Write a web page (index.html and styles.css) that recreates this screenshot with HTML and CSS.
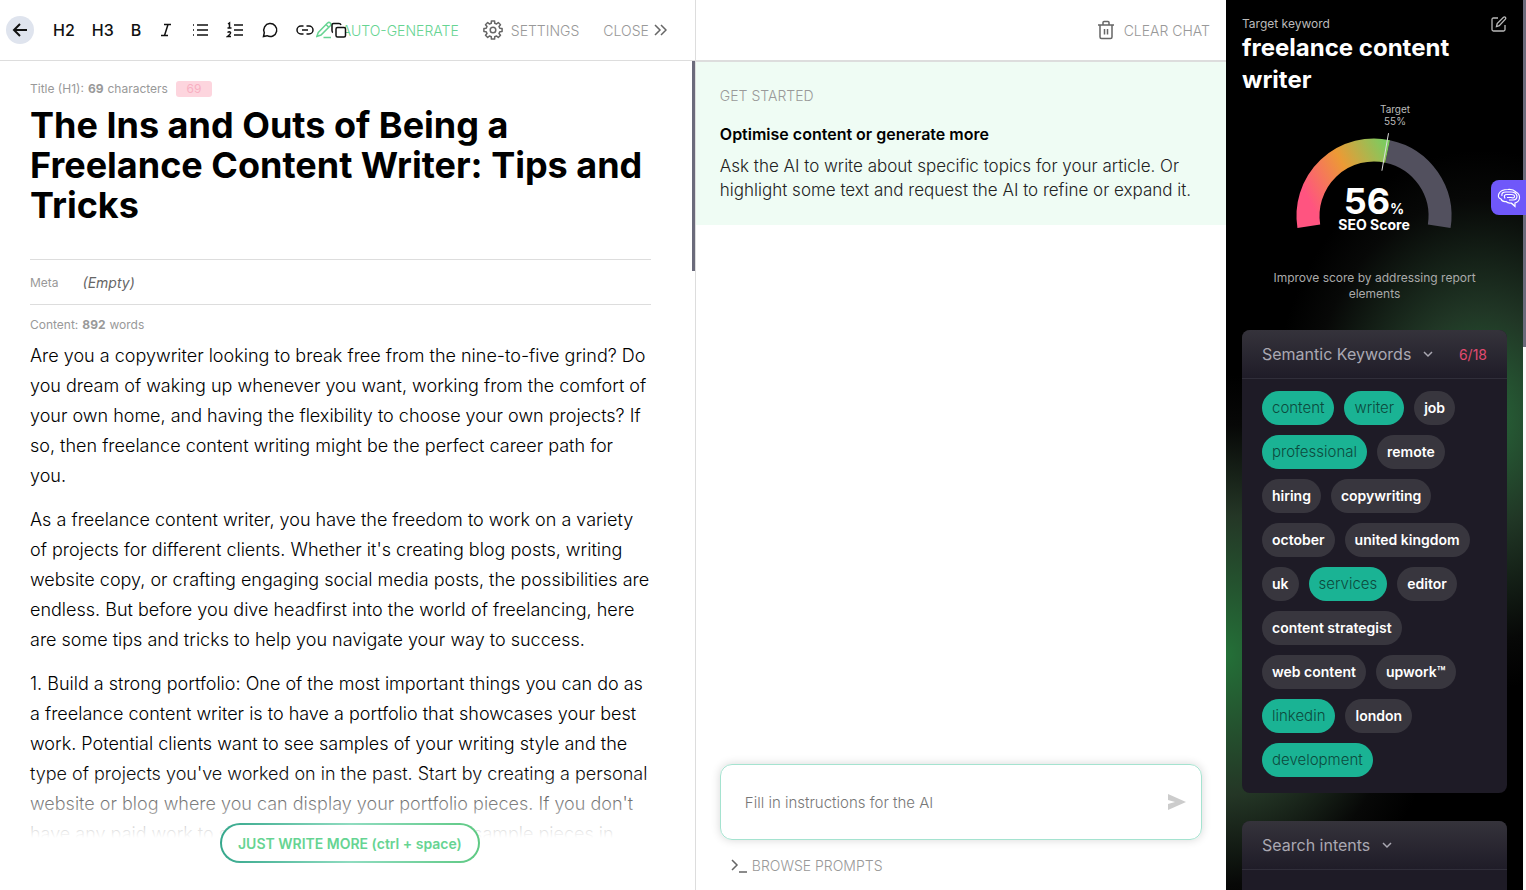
FILE: index.html
```html
<!DOCTYPE html>
<html lang="en">
<head>
  <meta charset="UTF-8" />
  <meta name="viewport" content="width=device-width, initial-scale=1.0"/>
  <title>Content editor</title>
  <link rel="stylesheet" href="styles.css">
</head>
<body>
  <div class="app">

    <main class="editor">
      <header class="toolbar">
        <div class="tools">
          <button type="button" class="back" aria-label="Back">
            <svg width="16" height="16" viewBox="0 0 16 16"><path d="M15 8H2M8 2L2 8l6 6"/></svg>
          </button>
          <button type="button" class="tool">H2</button>
          <button type="button" class="tool">H3</button>
          <button type="button" class="tool">B</button>
          <button type="button" class="tool" aria-label="Italic">
            <svg class="thin" width="16" height="18" viewBox="0 0 16 18"><path d="M6 3.500h7M3 14.500h7M10 3.500L6.500 14.500"/></svg>
          </button>
          <button type="button" class="tool" aria-label="Bullet list">
            <svg class="thin" width="18" height="18" viewBox="0 0 18 18"><path d="M6 4h11M6 9h11M6 14h11M2 4h1M2 9h1M2 14h1"/></svg>
          </button>
          <button type="button" class="tool" aria-label="Numbered list">
            <svg class="thin" width="18" height="18" viewBox="0 0 18 18"><path d="M8 4h9M8 9h9M8 14h9M2 3l1.500-1v5M1.500 7h4M1.500 11.500q2-1.500 3 0q.5 1-3 4H5"/></svg>
          </button>
          <button type="button" class="tool" aria-label="Comment">
            <svg class="thin" width="18" height="18" viewBox="0 0 18 18"><path d="M2.500 15.500l.8-3.800a6.500 6.500 0 1 1 2.700 3z"/></svg>
          </button>
          <button type="button" class="tool" aria-label="Link">
            <svg class="thin" width="18" height="18" viewBox="0 0 18 18"><path d="M7.500 5H5a4 4 0 0 0 0 8h2.500M10.500 5H13a4 4 0 0 1 0 8h-2.500M6 9h6"/></svg>
          </button>
          <button type="button" class="tool" aria-label="Copy">
            <svg class="thin" width="16" height="18" viewBox="0 0 16 18"><rect x="5" y="6.500" width="9.500" height="9.500" rx="1.500" fill="#fff"/><path d="M2 11.500c-1-.3-1-1-1-2V4Q1 2.500 2.500 2.500h5.500q1.500 0 2 1.500"/></svg>
          </button>
        </div>
        <div class="actions">
          <button type="button" class="action generate">
            <svg width="18" height="20" viewBox="0 0 18 20"><path d="M.8 16.500l1.500-4L11.500 3q1.500-1.200 2.800 0t0 2.800L5 15zM10 4.500l2.800 2.800M7.500 17.500H15"/></svg>
            <span>AUTO-GENERATE</span>
          </button>
          <button type="button" class="action">
            <svg width="20" height="20" viewBox="0 0 20 20"><path stroke-linejoin="round" d="M8.300 3.200L8.400.9h3.200l.1 2.300L13.600 4l1.700-1.500 2.200 2.200L16 6.400l.8 1.900 2.300.1v3.200l-2.300.1-.8 1.900 1.500 1.700-2.200 2.200-1.700-1.500-1.900.8-.1 2.300H8.400l-.1-2.300L6.400 16l-1.700 1.500-2.200-2.200L4 13.600l-.8-1.900-2.300-.1V8.400l2.300-.1L4 6.400 2.500 4.700l2.200-2.200L6.400 4z"/><circle cx="10" cy="10" r="2.800"/></svg>
            <span>SETTINGS</span>
          </button>
          <button type="button" class="action close">
            <span>CLOSE</span>
            <svg width="14" height="14" viewBox="0 0 14 14"><path d="M2 2l5 5-5 5M8 2l5 5-5 5"/></svg>
          </button>
        </div>
      </header>

      <article class="document">
        <p class="caption">Title (H1): <b>69</b> characters <span class="badge">69</span></p>
        <h1>The Ins and Outs of Being a Freelance Content Writer: Tips and Tricks</h1>
        <div class="meta"><span class="meta-label">Meta</span><em>(Empty)</em></div>
        <p class="caption">Content: <b>892</b> words</p>
        <div class="text">
          <p>Are you a copywriter looking to break free from the nine-to-five grind? Do you dream of waking up whenever you want, working from the comfort of your own home, and having the flexibility to choose your own projects? If so, then freelance content writing might be the perfect career path for you.</p>
          <p>As a freelance content writer, you have the freedom to work on a variety of projects for different clients. Whether it's creating blog posts, writing website copy, or crafting engaging social media posts, the possibilities are endless. But before you dive headfirst into the world of freelancing, here are some tips and tricks to help you navigate your way to success.</p>
          <p>1. Build a strong portfolio: One of the most important things you can do as a freelance content writer is to have a portfolio that showcases your best work. Potential clients want to see samples of your writing style and the type of projects you've worked on in the past. Start by creating a personal website or blog where you can display your portfolio pieces. If you don't have any paid work to showcase yet, you can create sample pieces in</p>
        </div>
      </article>
      <div class="scroll-thumb"></div>
      <div class="fade">
        <button type="button" class="write-more">JUST WRITE MORE (ctrl + space)</button>
      </div>
    </main>

    <section class="chat">
      <header class="chat-header">
        <button type="button" class="action">
          <svg width="20" height="20" viewBox="0 0 20 20"><path d="M2 5h16M7 5V2.500q0-1 1-1h4q1 0 1 1V5M4 5v12q0 1.500 1.500 1.500h9q1.500 0 1.500-1.500V5M8.500 9v5.500M11.500 9v5.500"/></svg>
          <span>CLEAR CHAT</span>
        </button>
      </header>
      <div class="intro">
        <p class="intro-label">GET STARTED</p>
        <h3>Optimise content or generate more</h3>
        <p>Ask the AI to write about specific topics for your article. Or highlight some text and request the AI to refine or expand it.</p>
      </div>
      <form class="prompt">
        <div class="prompt-box">
          <input type="text" aria-label="Instructions for the AI" placeholder="Fill in instructions for the AI">
          <button type="button" aria-label="Send">
            <svg width="20" height="18" viewBox="0 0 20 18"><path d="M1 1l18 8-18 8v-6l7-2-7-2z"/></svg>
          </button>
        </div>
        <button type="button" class="action browse">
          <svg width="18" height="16" viewBox="0 0 18 16"><path d="M2 2l5 5-5 5M9 14h8"/></svg>
          <span>BROWSE PROMPTS</span>
        </button>
      </form>
    </section>

    <aside class="report">
      <div class="keyword-top">
        <span>Target keyword</span>
        <button type="button" aria-label="Edit keyword">
          <svg width="16" height="16" viewBox="0 0 16 16"><path d="M7 2H2.500Q1 2 1 3.500v10Q1 15 2.500 15h10q1.500 0 1.500-1.500V9M5.500 10.500l.7-3L12.500 1.200q1-.7 1.800.1t.1 1.800L8.300 9.700z"/></svg>
        </button>
      </div>
      <h2>freelance content writer</h2>

      <svg class="gauge" width="181" height="134" viewBox="0 0 181 134" role="img" aria-label="SEO score 56%">
        <defs>
          <linearGradient id="score" gradientUnits="userSpaceOnUse" x1="14" y1="100" x2="106" y2="50">
            <stop offset="0.100" stop-color="#ff5480"/>
            <stop offset="0.550" stop-color="#ec9a35"/>
            <stop offset="1" stop-color="#7ccb60"/>
          </linearGradient>
        </defs>
        <path class="gauge-rest" d="M103.600 49.400A66 66 0 0 1 155.200 124.300"/>
        <path class="gauge-score" d="M24.800 124.300A66 66 0 0 1 103.600 49.400"/>
        <path class="gauge-target" d="M104.500 31.200L97.900 68.700"/>
        <text class="gauge-label" x="111" y="11">Target</text>
        <text class="gauge-label" x="111" y="23">55%</text>
        <text class="gauge-value" x="90" y="112">56<tspan class="gauge-percent">%</tspan></text>
        <text class="gauge-name" x="90" y="128">SEO Score</text>
      </svg>
      <p class="hint">Improve score by addressing report elements</p>

      <section class="card">
        <header>
          <button type="button">Semantic Keywords
            <svg width="10" height="8" viewBox="0 0 10 8"><path d="M1 2l4 4 4-4"/></svg>
          </button>
          <span class="count">6/18</span>
        </header>
        <ul class="chips">
          <li class="used">content</li>
          <li class="used">writer</li>
          <li>job</li>
          <li class="used">professional</li>
          <li>remote</li>
          <li>hiring</li>
          <li>copywriting</li>
          <li>october</li>
          <li>united kingdom</li>
          <li>uk</li>
          <li class="used">services</li>
          <li>editor</li>
          <li>content strategist</li>
          <li>web content</li>
          <li>upwork™</li>
          <li class="used">linkedin</li>
          <li>london</li>
          <li class="used">development</li>
        </ul>
      </section>

      <section class="card">
        <header>
          <button type="button">Search intents
            <svg width="10" height="8" viewBox="0 0 10 8"><path d="M1 2l4 4 4-4"/></svg>
          </button>
        </header>
        <div class="card-body"></div>
      </section>
    </aside>
    <div class="page-scroll"><div class="page-thumb"></div></div>
  </div>

  <button type="button" class="assistant" aria-label="Assistant">
    <svg width="24" height="20" viewBox="0 0 24 20"><path d="M18 18.500v-3.500q4-1 4.500-5 .3-4-3.500-6-3-3-8-2.500Q4 1.500 2 5.500q-2 4 2 5.500 1 3 5 2.500 2 2 5 1.500zM5 8Q4 4 9 4h5q5 0 6 4 0 4-4 4h-4M8 10.500q-2-4 2-4h4q4 0 3.500 2.500-1 1.500-3.500.5h-4M18 18.500l-3-3"/></svg>
  </button>
</body>
</html>
```
FILE: styles.css
```css
* {
  box-sizing: border-box;
}
body {
  margin: 0;
  font-family: Inter, "Liberation Sans", sans-serif;
  color: #111;
  background: #fff;
}
h1, h2, h3, p, ul {
  margin: 0;
  padding: 0;
}
button {
  display: flex;
  align-items: center;
  padding: 0;
  border: none;
  background: none;
  font: inherit;
  color: inherit;
  cursor: pointer;
}
svg {
  flex: none;
  fill: none;
  stroke: currentColor;
  stroke-width: 2;
}
.app {
  display: grid;
  grid-template-columns: 21fr 16fr 297px 3px;
  height: 100vh;
  overflow: hidden;
}

/* editor */
.editor {
  position: relative;
  min-width: 0;
  overflow: hidden;
  border-right: 1px solid #ddd;
}
.toolbar {
  display: flex;
  align-items: center;
  height: 61px;
  padding: 0 28px 0 6px;
  border-bottom: 1px solid #ddd;
}
.tools {
  display: flex;
  flex: 1 1 0;
  align-items: center;
  gap: 17px;
  min-width: 0;
}
.back {
  flex: none;
  justify-content: center;
  width: 28px;
  height: 28px;
  margin-right: 2px;
  border-radius: 50%;
  background: #dfe4ee;
}
.tool {
  position: relative;
  z-index: 1;
  flex: none;
  font-size: 16px;
  font-weight: 500;
}
.thin {
  stroke-width: 1.5;
}
.actions {
  display: flex;
  flex: none;
  gap: 24px;
}
.action {
  gap: 8px;
  font-size: 14px;
  font-weight: 300;
  color: #999;
}
.action svg {
  color: #666;
  stroke-width: 1.5;
}
.generate, .generate svg {
  color: #66d492;
}
.close {
  gap: 4px;
}
.document {
  padding: 20px 44px 0 30px;
}
.caption {
  display: flex;
  align-items: center;
  gap: 4px;
  height: 16px;
  font-size: 12px;
  line-height: 16px;
  color: #999;
}
.badge {
  width: 36px;
  margin-left: 4px;
  border-radius: 3px;
  background: #fdd5de;
  color: #f8b0c2;
  text-align: center;
}
h1 {
  margin: 8px 0 34px;
  font-size: 36px;
  font-weight: 700;
  line-height: 40px;
  color: #000;
}
.meta {
  display: flex;
  align-items: center;
  gap: 24px;
  height: 46px;
  margin-bottom: 12px;
  border-top: 1px solid #ddd;
  border-bottom: 1px solid #ddd;
  font-size: 14px;
  color: #666;
}
.meta-label {
  font-size: 12px;
  color: #999;
}
.text {
  padding-top: 8px;
}
.text p {
  margin-bottom: 14px;
  font-size: 18px;
  font-weight: 300;
  line-height: 30px;
  color: #000;
}
.scroll-thumb {
  position: absolute;
  top: 61px;
  right: 0;
  width: 3px;
  height: 210px;
  background: #6b6b7b;
}
.fade {
  position: absolute;
  right: 3px;
  bottom: 0;
  left: 8px;
  display: flex;
  justify-content: center;
  padding: 53px 0 27px;
  background: linear-gradient(rgba(255,255,255,0), #fff 68px);
}
.write-more {
  height: 40px;
  padding: 0 16px;
  border: 2px solid transparent;
  border-radius: 20px;
  background: linear-gradient(#fff, #fff) padding-box, linear-gradient(90deg, #35a78c, #8fdcc0 50%, #5ec983) border-box;
  font-size: 14px;
  font-weight: 600;
  color: #66d492;
}

/* chat */
.chat {
  display: flex;
  flex-direction: column;
  min-width: 0;
}
.chat-header {
  display: flex;
  justify-content: flex-end;
  height: 62px;
  padding: 0 16px;
  border-bottom: 2px solid #ddd;
}
.intro {
  padding: 24px 24px 23px;
  background: #effcf4;
  font-size: 17px;
  font-weight: 300;
  line-height: 24px;
  color: #222;
}
.intro .intro-label {
  margin-bottom: 16px;
  font-size: 14px;
  line-height: 20px;
  color: #999;
}
.intro h3 {
  margin-bottom: 8px;
  font-size: 16px;
  font-weight: 600;
  line-height: 24px;
  color: #000;
}
.prompt {
  margin-top: auto;
  padding: 0 24px 14px;
}
.prompt-box {
  display: flex;
  align-items: center;
  height: 76px;
  padding: 0 14px 0 24px;
  border: 1px solid #a5e3d0;
  border-radius: 12px;
  box-shadow: 0 0 10px rgba(0,0,0,0.16);
}
.prompt-box input {
  flex: 1;
  min-width: 0;
  padding: 0;
  border: none;
  outline: none;
  background: none;
  font: inherit;
  font-size: 15px;
  font-weight: 300;
}
.prompt-box input::placeholder {
  color: #777;
}
.prompt-box svg {
  fill: #ccc;
  stroke: none;
}
.browse {
  gap: 4px;
  margin: 16px 0 0 10px;
  line-height: 20px;
}

/* report */
.report {
  overflow: hidden;
  padding: 16px 16px 0;
  background:
    radial-gradient(ellipse 210px 270px at 86% 420px, #28683a, rgba(38,64,44,0.85) 40%, rgba(14,16,14,0.5) 82%, rgba(0,0,0,0)),
    radial-gradient(ellipse 220px 280px at 0 655px, #247038, rgba(40,60,42,0.9) 50%, rgba(14,16,14,0.5) 82%, rgba(0,0,0,0)),
    #000;
  color: #fff;
}
.keyword-top {
  display: flex;
  justify-content: space-between;
  height: 16px;
  font-size: 12px;
  line-height: 16px;
  color: #bbb;
}
.keyword-top svg {
  stroke-width: 1.3;
}
h2 {
  margin-bottom: 6px;
  font-size: 24px;
  font-weight: 700;
  line-height: 32px;
}
.gauge {
  display: block;
  margin: 0 auto;
}
.gauge path {
  stroke-width: 23;
}
.gauge .gauge-rest {
  stroke: #52505e;
}
.gauge .gauge-score {
  stroke: url(#score);
}
.gauge .gauge-target {
  stroke: #ddd;
  stroke-width: 1;
}
.gauge text {
  fill: #fff;
  stroke: none;
  text-anchor: middle;
  font-weight: 700;
}
.gauge .gauge-label {
  fill: #bbb;
  font-size: 10px;
  font-weight: 400;
}
.gauge-value {
  font-size: 36px;
}
.gauge-percent {
  font-size: 14px;
}
.gauge-name {
  font-size: 14px;
}
.hint {
  padding: 0 20px;
  margin: 34px 0 28px;
  font-size: 12px;
  line-height: 16px;
  text-align: center;
  color: #aaa;
}
.card {
  margin-bottom: 28px;
  border-radius: 8px;
  background: #1e1b26;
}
.card header {
  display: flex;
  align-items: center;
  justify-content: space-between;
  height: 49px;
  padding: 0 20px;
  border-bottom: 1px solid #302e3a;
  border-radius: 8px 8px 0 0;
  background: linear-gradient(#35333b, #1f1c28);
  font-size: 16px;
  color: #aaa8b2;
}
.card header button {
  gap: 12px;
}
.card header svg {
  stroke-width: 1.5;
}
.card header .count {
  font-size: 14px;
  color: #e24b70;
}
.chips {
  display: flex;
  flex-wrap: wrap;
  gap: 10px;
  padding: 12px 20px 16px;
  list-style: none;
}
.chips li {
  padding: 0 10px;
  border-radius: 17px;
  background: #38363e;
  font-size: 14px;
  font-weight: 600;
  line-height: 34px;
}
.chips .used {
  background: #1ab394;
  font-size: 15px;
  font-weight: 300;
  color: #0c4a3d;
}
.card-body {
  height: 200px;
}
.page-scroll {
  background: #fafafa;
}
.page-thumb {
  height: 39%;
  background: #6b6b7b;
}
.assistant {
  position: fixed;
  top: 180px;
  right: 0;
  justify-content: center;
  width: 35px;
  height: 35px;
  border-radius: 8px 0 0 8px;
  background: #6f58fa;
  color: #fff;
}
.assistant svg {
  stroke-width: 1.2;
}
```
